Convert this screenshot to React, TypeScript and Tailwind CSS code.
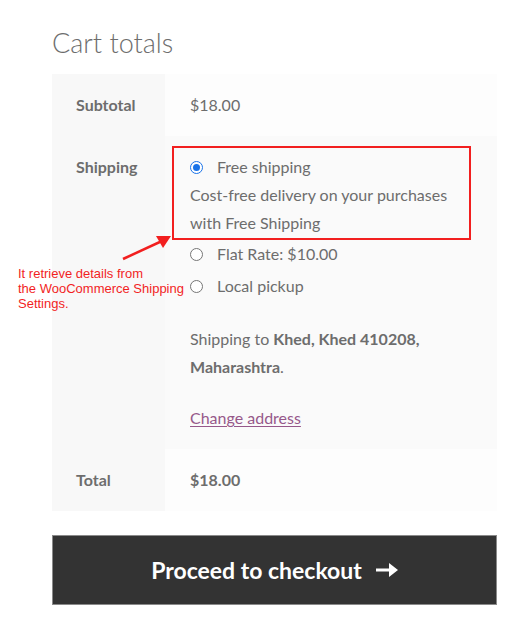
import React from "react";

const font = "font-['Lato','Noto_Sans',sans-serif]";

function Radio({ checked }: { checked?: boolean }) {
  return checked ? (
    <span className="inline-flex h-[13px] w-[13px] shrink-0 items-center justify-center rounded-full border border-[#1a73e8] bg-white">
      <span className="h-[7px] w-[7px] rounded-full bg-[#1a73e8]" />
    </span>
  ) : (
    <span className="inline-block h-[13px] w-[13px] shrink-0 rounded-full border border-[#767676] bg-white" />
  );
}

function Row({
  label,
  children,
  shaded,
}: {
  label: string;
  children: React.ReactNode;
  shaded?: boolean;
}) {
  return (
    <>
      <div className="bg-[#f8f8f8] py-[17px] pl-[24px] font-bold">{label}</div>
      <div className={(shaded ? "bg-[#fafafa]" : "bg-[#fdfdfd]") + " py-[17px] pl-[25px] pr-[20px]"}>
        {children}
      </div>
    </>
  );
}

export default function App() {
  return (
    <div className={`relative min-h-[644px] bg-white pl-[52px] pr-[33px] pt-[25px] text-[16px] leading-[28px] text-[#6d6d6d] ${font}`}>
      <h2 className="mb-[13px] text-[27px] font-light leading-[36px] text-[#6d6d6d]">Cart totals</h2>

      <div className="grid grid-cols-[113px_1fr]">
        <Row label="Subtotal">$18.00</Row>

        <Row label="Shipping" shaded>
          <ul>
            <li className="relative mb-[3px]">
              <div className="flex items-center gap-[14px]">
                <Radio checked />
                <span>Free shipping</span>
              </div>
              <p>
                Cost-free delivery on your purchases
                <br />
                with Free Shipping
              </p>
              <div className="pointer-events-none absolute left-[-18px] top-[-7px] h-[94px] w-[299px] border-2 border-[#f21f1f]" />
            </li>
            <li className="mb-[4px] flex items-center gap-[14px]">
              <Radio />
              <span>Flat Rate: $10.00</span>
            </li>
            <li className="flex items-center gap-[14px]">
              <Radio />
              <span>Local pickup</span>
            </li>
          </ul>
          <p className="mt-[25px]">
            Shipping to <strong className="font-bold">Khed, Khed 410208,</strong>
            <br />
            <strong className="font-bold">Maharashtra</strong>.
          </p>
          <p className="mt-[23px]">
            <a href="#" className="text-[#96588a] underline underline-offset-2">
              Change address
            </a>
          </p>
        </Row>

        <Row label="Total">
          <strong className="font-bold">$18.00</strong>
        </Row>
      </div>

      <button className="mt-[24px] flex h-[70px] w-full items-center justify-center gap-[14px] border border-[#8a8a8a] bg-[#333333] text-[23px] font-bold text-white">
        Proceed to checkout
        <svg width="22" height="14" viewBox="0 0 22 14" fill="white">
          <rect x="0" y="5.5" width="15" height="3" />
          <path d="M13 0 L22 7 L13 14 Z" />
        </svg>
      </button>

      {/* annotation */}
      <div className="pointer-events-none absolute left-[18px] top-[266px] font-['Liberation_Sans',Arial,sans-serif] text-[13px] leading-[15px] text-[#f21f1f]">
        It retrieve details from
        <br />
        the WooCommerce Shipping
        <br />
        Settings.
      </div>
      <svg className="pointer-events-none absolute left-[118px] top-[228px]" width="60" height="36" viewBox="0 0 60 36">
        <line x1="5" y1="31" x2="44" y2="13" stroke="#f21f1f" strokeWidth="2.5" />
        <path d="M53 8 L38 8 L45 20 Z" fill="#f21f1f" />
      </svg>
    </div>
  );
}
